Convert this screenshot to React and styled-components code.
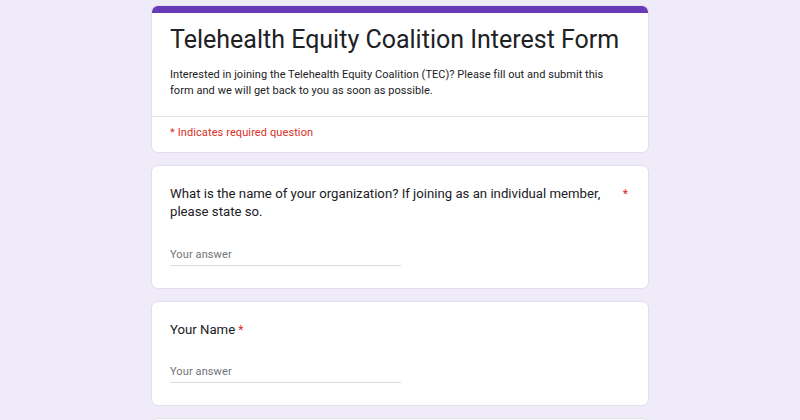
import React from 'react';
import styled, { createGlobalStyle } from 'styled-components';

const GlobalStyle = createGlobalStyle`
  body {
    margin: 0;
    background: #f0ebf8;
    font-family: Roboto, "Liberation Sans", Arial, sans-serif;
  }
`;

const Page = styled.div`
  display: flex;
  flex-direction: column;
  align-items: center;
  gap: 12px;
  padding: 5px 0 40px;
`;

const Card = styled.div`
  width: 498px;
  box-sizing: border-box;
  background: #fff;
  border: 1px solid #e2dfe8;
  border-radius: 7px;
  overflow: hidden;
`;

const TopBar = styled.div`
  height: 8px;
  background: #673ab7;
  margin: -1px -1px 0;
`;

const HeaderBody = styled.div`
  padding: 11px 18px 17px;
`;

const Title = styled.h1`
  margin: 0;
  font-weight: 400;
  font-size: 25px;
  line-height: 32px;
  color: #202124;
  white-space: nowrap;
`;

const Description = styled.p`
  margin: 11px 0 0;
  max-width: 445px;
  font-size: 11px;
  line-height: 16px;
  letter-spacing: 0.05px;
  color: #202124;
`;

const Divider = styled.div`
  height: 1px;
  background: #e4e4e7;
`;

const Required = styled.div`
  padding: 8px 18px 11px;
  font-size: 11px;
  line-height: 16px;
  letter-spacing: 0.1px;
  color: #d93025;
`;

const QuestionCard = styled(Card)`
  padding: 19px 18px 22px;
`;

const QuestionRow = styled.div`
  display: flex;
  justify-content: space-between;
  gap: 16px;
`;

const QuestionText = styled.div`
  font-size: 13.2px;
  line-height: 18px;
  color: #202124;
  max-width: 440px;
`;

const Star = styled.span`
  color: #d93025;
  font-size: 12px;
  line-height: 18px;
  margin-left: ${(p) => (p.$inline ? '3px' : '0')};
  margin-right: ${(p) => (p.$inline ? '0' : '2px')};
`;

const Answer = styled.div`
  margin-top: ${(p) => p.$gap}px;
  width: 231px;
  border-bottom: 1px solid #dadce0;
  padding-bottom: 2px;
  font-size: 11px;
  line-height: 16px;
  letter-spacing: 0.1px;
  color: #70757a;
`;

function Question({ text, inlineStar, gap }) {
  return (
    <QuestionCard>
      <QuestionRow>
        <QuestionText>
          {text}
          {inlineStar && <Star $inline>*</Star>}
        </QuestionText>
        {!inlineStar && <Star>*</Star>}
      </QuestionRow>
      <Answer $gap={gap}>Your answer</Answer>
    </QuestionCard>
  );
}

export default function App() {
  return (
    <>
      <GlobalStyle />
      <Page>
        <Card>
          <TopBar />
          <HeaderBody>
            <Title>Telehealth Equity Coalition Interest Form</Title>
            <Description>
              Interested in joining the Telehealth Equity Coalition (TEC)? Please fill out and submit this
              form and we will get back to you as soon as possible.
            </Description>
          </HeaderBody>
          <Divider />
          <Required>* Indicates required question</Required>
        </Card>
        <Question
          text="What is the name of your organization? If joining as an individual member, please state so."
          gap={26}
        />
        <Question text="Your Name" inlineStar gap={25} />
        <Question text="Email" inlineStar gap={25} />
      </Page>
    </>
  );
}
